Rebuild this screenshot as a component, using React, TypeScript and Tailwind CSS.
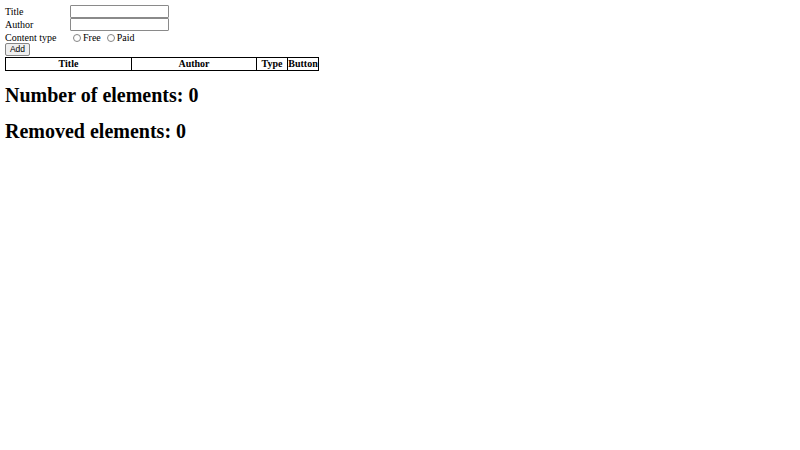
import { useState } from "react";

type Item = { title: string; author: string; type: string };

function Radio({ label, checked, onChange }: { label: string; checked: boolean; onChange: () => void }) {
  return (
    <label className="flex items-center mr-[3px]" onClick={onChange}>
      <span className="ml-[3px] mr-[2px] w-[8px] h-[8px] rounded-full border border-[#858585] bg-white flex items-center justify-center">
        {checked && <span className="w-[4px] h-[4px] rounded-full bg-[#0075ff]" />}
      </span>
      {label}
    </label>
  );
}

export default function App() {
  const [items, setItems] = useState<Item[]>([]);
  const [removed, setRemoved] = useState(0);
  const [title, setTitle] = useState("");
  const [author, setAuthor] = useState("");
  const [type, setType] = useState("");

  const add = () => {
    setItems([...items, { title, author, type }]);
    setTitle("");
    setAuthor("");
  };

  return (
    <div className="min-h-[450px] bg-white p-[5px] text-[10px] leading-[11.5px] text-black font-['Liberation_Serif','Times_New_Roman',serif]">
      {/* Form */}
      <div className="flex items-center h-[13px]">
        <span className="w-[65px]">Title</span>
        <input
          value={title}
          onChange={(e) => setTitle(e.target.value)}
          className="w-[99px] h-[13px] border border-[#8a8a8a] rounded-[1px] px-[1px] text-[8px] outline-none"
        />
      </div>
      <div className="flex items-center h-[13px]">
        <span className="w-[65px]">Author</span>
        <input
          value={author}
          onChange={(e) => setAuthor(e.target.value)}
          className="w-[99px] h-[13px] border border-[#8a8a8a] rounded-[1px] px-[1px] text-[8px] outline-none"
        />
      </div>
      <div className="flex items-center h-[13px]">
        <span className="w-[65px]">Content type</span>
        <Radio label="Free" checked={type === "Free"} onChange={() => setType("Free")} />
        <Radio label="Paid" checked={type === "Paid"} onChange={() => setType("Paid")} />
      </div>
      <button
        onClick={add}
        className="block mt-[-1px] h-[13px] w-[25px] bg-[#efefef] border border-[#858585] rounded-[2px] text-[8.5px] leading-none font-['Liberation_Sans',Arial,sans-serif]"
      >
        Add
      </button>

      {/* Table */}
      <table className="mt-[1px] w-[313px] table-fixed border-collapse border border-black">
        <thead>
          <tr className="h-[13px]">
            <th className="w-[126px] border border-black p-0 font-bold">Title</th>
            <th className="w-[125px] border border-black p-0 font-bold">Author</th>
            <th className="w-[31px] border border-black p-0 font-bold">Type</th>
            <th className="w-[31px] border border-black p-0 font-bold">Button</th>
          </tr>
        </thead>
        <tbody>
          {items.map((it, i) => (
            <tr key={i}>
              <td className="border border-black px-[1px]">{it.title}</td>
              <td className="border border-black px-[1px]">{it.author}</td>
              <td className="border border-black px-[1px]">{it.type}</td>
              <td className="border border-black px-[1px]">
                <button
                  onClick={() => {
                    setItems(items.filter((_, j) => j !== i));
                    setRemoved(removed + 1);
                  }}
                  className="text-[8px] bg-[#efefef] border border-[#858585] rounded-[2px] px-[2px]"
                >
                  Remove
                </button>
              </td>
            </tr>
          ))}
        </tbody>
      </table>

      <h1 className="mt-[13px] mb-[13px] text-[20px] leading-[23px] font-bold">Number of elements: {items.length}</h1>
      <h1 className="mt-[13px] text-[20px] leading-[23px] font-bold">Removed elements: {removed}</h1>
    </div>
  );
}
